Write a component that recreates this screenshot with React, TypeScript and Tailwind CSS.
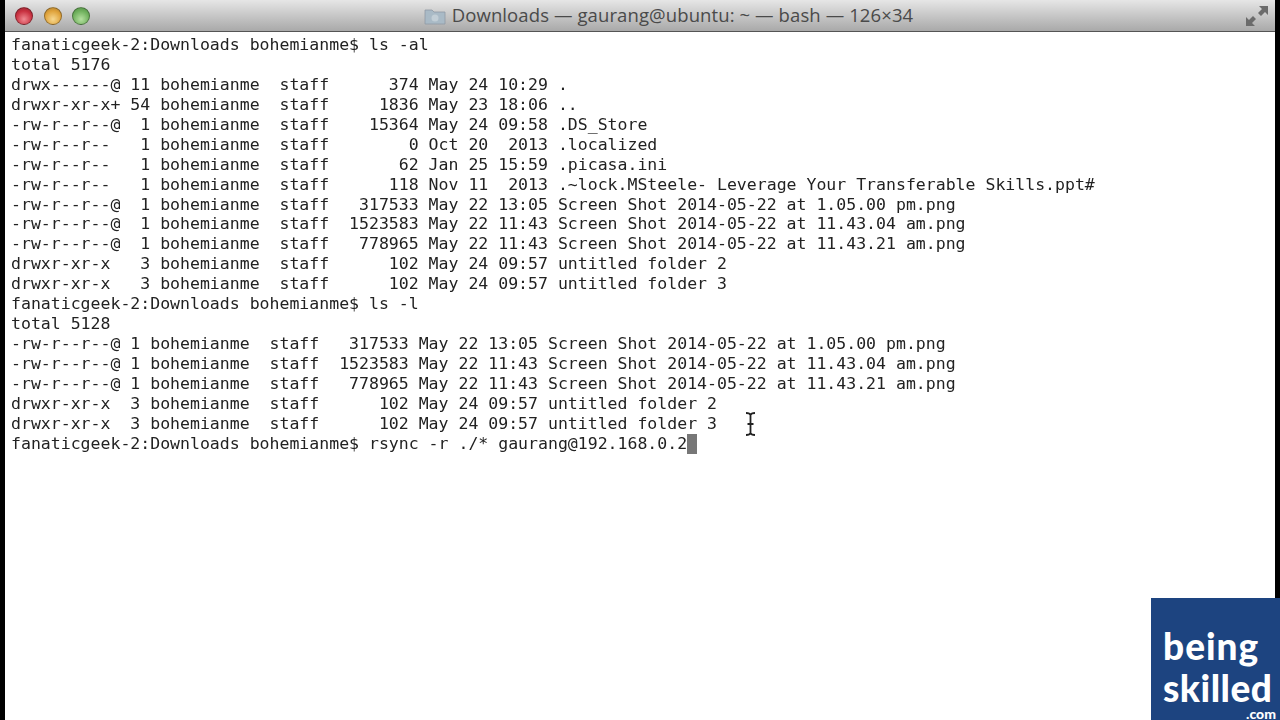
const lines = [
  "fanaticgeek-2:Downloads bohemianme$ ls -al",
  "total 5176",
  "drwx------@ 11 bohemianme  staff      374 May 24 10:29 .",
  "drwxr-xr-x+ 54 bohemianme  staff     1836 May 23 18:06 ..",
  "-rw-r--r--@  1 bohemianme  staff    15364 May 24 09:58 .DS_Store",
  "-rw-r--r--   1 bohemianme  staff        0 Oct 20  2013 .localized",
  "-rw-r--r--   1 bohemianme  staff       62 Jan 25 15:59 .picasa.ini",
  "-rw-r--r--   1 bohemianme  staff      118 Nov 11  2013 .~lock.MSteele- Leverage Your Transferable Skills.ppt#",
  "-rw-r--r--@  1 bohemianme  staff   317533 May 22 13:05 Screen Shot 2014-05-22 at 1.05.00 pm.png",
  "-rw-r--r--@  1 bohemianme  staff  1523583 May 22 11:43 Screen Shot 2014-05-22 at 11.43.04 am.png",
  "-rw-r--r--@  1 bohemianme  staff   778965 May 22 11:43 Screen Shot 2014-05-22 at 11.43.21 am.png",
  "drwxr-xr-x   3 bohemianme  staff      102 May 24 09:57 untitled folder 2",
  "drwxr-xr-x   3 bohemianme  staff      102 May 24 09:57 untitled folder 3",
  "fanaticgeek-2:Downloads bohemianme$ ls -l",
  "total 5128",
  "-rw-r--r--@ 1 bohemianme  staff   317533 May 22 13:05 Screen Shot 2014-05-22 at 1.05.00 pm.png",
  "-rw-r--r--@ 1 bohemianme  staff  1523583 May 22 11:43 Screen Shot 2014-05-22 at 11.43.04 am.png",
  "-rw-r--r--@ 1 bohemianme  staff   778965 May 22 11:43 Screen Shot 2014-05-22 at 11.43.21 am.png",
  "drwxr-xr-x  3 bohemianme  staff      102 May 24 09:57 untitled folder 2",
  "drwxr-xr-x  3 bohemianme  staff      102 May 24 09:57 untitled folder 3",
];

function Light({ className }: { className: string }) {
  return <div className={`w-[18px] h-[18px] rounded-full border border-[#00000055] ${className}`} />;
}

export default function App() {
  return (
    <div className="relative w-[1280px] h-[720px] overflow-hidden bg-black px-[5px] font-['DejaVu_Sans_Mono',monospace]">
      <div className="flex flex-col h-full bg-white">
        <div className="relative flex items-center h-[32px] shrink-0 bg-gradient-to-b from-[#e6e6e6] to-[#a9a9a9] border-b border-[#555]">
          <div className="flex items-center gap-[10.5px] pl-[10px]">
            <Light className="bg-[radial-gradient(circle_at_50%_70%,#f08a92,#c8303f_60%,#8e2530)]" />
            <Light className="bg-[radial-gradient(circle_at_50%_70%,#f6d890,#dfa23a_60%,#a87b2e)]" />
            <Light className="bg-[radial-gradient(circle_at_50%_70%,#b5e0a0,#6fb05c_60%,#4f8a45)]" />
          </div>
          <div className="flex-1 flex items-center justify-center gap-[6px] pl-[2px]">
            <svg width="22" height="18" viewBox="0 0 22 18">
              <path d="M1 3h7l2 2h11v12H1z" fill="#a9bac6" stroke="#8f9ba5" strokeWidth="0.8" />
              <circle cx="11" cy="11" r="3.5" fill="#c2ced6" />
            </svg>
            <span className="font-['Open_Sans',sans-serif] text-[18.5px] leading-none tracking-[0.1px] text-[#4a4a4a]">
              Downloads — gaurang@ubuntu: ~ — bash — 126×34
            </span>
          </div>
          <svg className="mr-[6px]" width="24" height="22" viewBox="0 0 24 22" fill="#6b6b6b">
            <path d="M23 1h-9l3 3-4 4 3 3 4-4 3 3z" />
            <path d="M1 21h9l-3-3 4-4-3-3-4 4-3-3z" />
          </svg>
        </div>
        <div className="pl-[6px] pt-[3px] text-[16.53px] leading-[19.95px] text-[#222] blur-[0.3px] whitespace-pre">
          {lines.map((l) => (
            <div key={l} className="h-[19.95px]">{l}</div>
          ))}
          <div className="h-[19.95px] flex">
            <span>fanaticgeek-2:Downloads bohemianme$ rsync -r ./* gaurang@192.168.0.2</span>
            <span className="w-[9.96px] h-[19.95px] bg-[#777]" />
          </div>
        </div>
      </div>
      <svg className="absolute left-[743px] top-[411px]" width="15" height="26" viewBox="0 0 15 26" fill="none" stroke="#222" strokeWidth="1.8">
        <path d="M3 2c2 0 4 .5 4.500 2v18c-.5 1.500-2.500 2-4.500 2M12 2c-2 0-4 .5-4.500 2v18c.5 1.500 2.500 2 4.500 2M4.500 13h6" />
      </svg>
      <div className="absolute left-[1151px] top-[598px] w-[129px] h-[122px] bg-[#1d4480] text-white flex flex-col font-['Lato',sans-serif] font-black">
        <span className="pl-[12px] pt-[28px] text-[37px] leading-[40px] tracking-[1px]">being</span>
        <span className="pl-[12px] pt-[2px] text-[37px] leading-[40px] tracking-[0.5px]">skilled</span>
        <span className="self-end pr-[4px] text-[14px] leading-[12px]">.com</span>
      </div>
    </div>
  );
}
